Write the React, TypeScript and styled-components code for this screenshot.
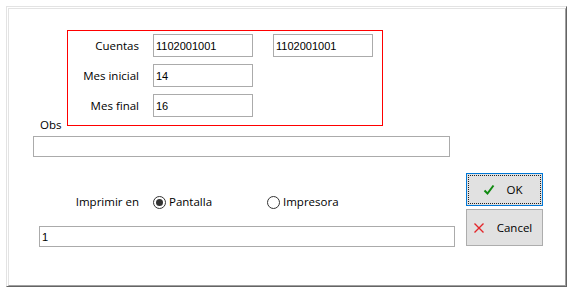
import React from 'react';
import styled, { createGlobalStyle } from 'styled-components';

const GlobalStyle = createGlobalStyle`
    html, body {
        margin: 0;
        padding: 0;
        background: #FFF;
    }
    body {
        font-family: "Open Sans", "Noto Sans", sans-serif;
        font-size: 11.5px;
        color: #000;
    }
`;

// WINDOW FRAME
const Window = styled.div`
    box-sizing: border-box;
    margin: 6px;
    width: 561px;
    height: 281px;
    border: 1px solid;
    border-color: #E3E3E3 #646464 #646464 #E3E3E3;
    padding: 1px 0 0 1px;
    background: #FFF;
`;

const WindowInner = styled.div`
    box-sizing: border-box;
    height: 100%;
    border: 1px solid;
    border-color: #E3E3E3 #A0A0A0 #A0A0A0 #E3E3E3;
    display: flex;
    gap: 11px;
`;

const MainColumn = styled.div`
    width: 446px;
    display: flex;
    flex-direction: column;
    align-items: flex-start;
`;

// RED GROUP
const RangeGroup = styled.div`
    box-sizing: border-box;
    margin: 21px 0 0 58px;
    width: 316px;
    height: 96px;
    border: 1px solid #FF0000;
    padding-top: 3px;
    display: grid;
    grid-template-columns: 71px 100px 100px;
    grid-auto-rows: 23px;
    column-gap: 14px;
    row-gap: 7px;
    align-items: center;

    & > :nth-child(3) {
        margin-left: 6px;
    }
`;

const FieldLabel = styled.span`
    text-align: right;
    white-space: nowrap;
    line-height: 16px;
`;

const TextBox = styled.div<{ w?: number; h?: number; left?: number; top?: number }>`
    box-sizing: border-box;
    width: ${(p) => p.w ?? 100}px;
    height: ${(p) => p.h ?? 23}px;
    margin-left: ${(p) => p.left ?? 0}px;
    margin-top: ${(p) => p.top ?? 0}px;
    border: 1px solid #ABABAB;
    background: #FFF;
    padding-left: 2px;
    display: flex;
    align-items: center;
    font-family: "Liberation Sans", Arial, sans-serif;
    font-size: 11px;
    white-space: nowrap;
`;

const ObsLabel = styled.span`
    margin: -9px 0 0 31px;
    line-height: 16px;
`;

// PRINT TARGET
const PrintRow = styled.div`
    margin: 37px 0 0 59px;
    height: 16px;
    display: grid;
    grid-template-columns: 71px 100px auto;
    column-gap: 14px;
    align-items: center;
`;

const RadioOption = styled.label`
    display: flex;
    align-items: center;
    gap: 3px;
    line-height: 16px;
    white-space: nowrap;
`;

const RadioCircle = styled.span<{ checked?: boolean }>`
    box-sizing: border-box;
    width: 13px;
    height: 13px;
    border-radius: 50%;
    border: 1px solid #333;
    display: flex;
    align-items: center;
    justify-content: center;

    &::after {
        content: '';
        display: ${(p) => (p.checked ? 'block' : 'none')};
        width: 7px;
        height: 7px;
        border-radius: 50%;
        background: #333;
    }
`;

// BUTTONS
const ButtonColumn = styled.div`
    margin-top: 164px;
    display: flex;
    flex-direction: column;
    gap: 3px;
`;

const DialogButton = styled.button<{ focused?: boolean; h: number }>`
    box-sizing: border-box;
    width: 77px;
    height: ${(p) => p.h}px;
    background: #E1E1E1;
    border: 1px solid ${(p) => (p.focused ? '#0078D7' : '#ADADAD')};
    outline: ${(p) => (p.focused ? '1px dotted #222' : 'none')};
    outline-offset: -3px;
    display: flex;
    align-items: center;
    justify-content: center;
    gap: 12px;
    padding: 0 4px 0 0;
    font-family: "Open Sans", "Noto Sans", sans-serif;
    font-size: 11.5px;
    color: #000;
`;

const CheckIcon = () => (
    <svg width="12" height="12" viewBox="0 0 12 12">
        <path d="M1.5 6.5 L4.5 9.5 L10.5 1.5" fill="none" stroke="#108A10" strokeWidth="2" />
    </svg>
);

const CrossIcon = () => (
    <svg width="12" height="12" viewBox="0 0 12 12">
        <path d="M1.5 1.5 L10.5 10.5 M10.5 1.5 L1.5 10.5" fill="none" stroke="#E3262A" strokeWidth="1.4" />
    </svg>
);

export default function App() {
    return (
        <>
            <GlobalStyle />
            <Window>
                <WindowInner>
                    <MainColumn>
                        <RangeGroup>
                            <FieldLabel>Cuentas</FieldLabel>
                            <TextBox>1102001001</TextBox>
                            <TextBox>1102001001</TextBox>
                            <FieldLabel>Mes inicial</FieldLabel>
                            <TextBox>14</TextBox>
                            <span />
                            <FieldLabel>Mes final</FieldLabel>
                            <TextBox>16</TextBox>
                        </RangeGroup>

                        <ObsLabel>Obs</ObsLabel>
                        <TextBox w={417} h={21} left={24} top={3} />

                        <PrintRow>
                            <FieldLabel>Imprimir en</FieldLabel>
                            <RadioOption>
                                <RadioCircle checked />
                                Pantalla
                            </RadioOption>
                            <RadioOption>
                                <RadioCircle />
                                Impresora
                            </RadioOption>
                        </PrintRow>

                        <TextBox w={416} h={21} left={30} top={16}>1</TextBox>
                    </MainColumn>

                    <ButtonColumn>
                        <DialogButton focused h={33}>
                            <CheckIcon />
                            OK
                        </DialogButton>
                        <DialogButton h={37}>
                            <CrossIcon />
                            Cancel
                        </DialogButton>
                    </ButtonColumn>
                </WindowInner>
            </Window>
        </>
    );
}
